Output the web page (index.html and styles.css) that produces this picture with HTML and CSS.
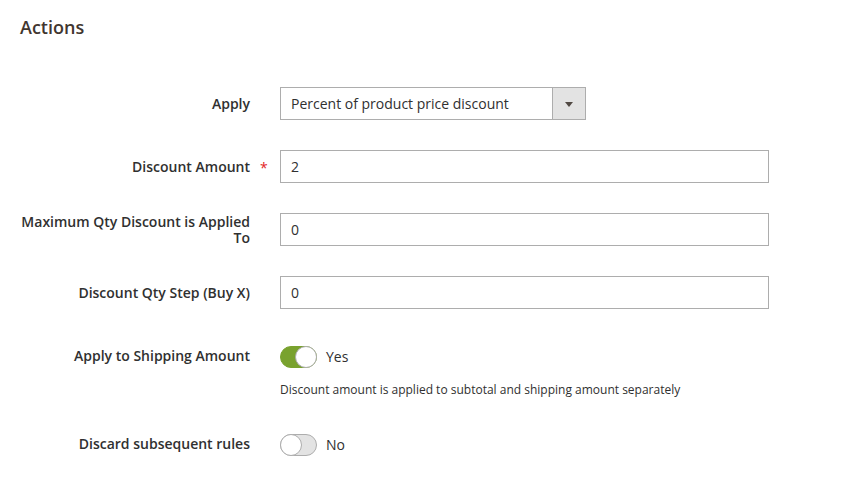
FILE: index.html
```html
<!DOCTYPE html>
<html>
<head>
<meta charset="utf-8">
<link rel="stylesheet" href="styles.css">
</head>
<body>
<div class="page">
  <div class="section-title">Actions</div>
  <div class="form">
    <div class="row">
      <div class="label">Apply</div>
      <div class="mark"></div>
      <div class="control">
        <div class="select">
          <span class="select-text">Percent of product price discount</span>
          <span class="select-btn"><span class="arrow"></span></span>
        </div>
      </div>
    </div>
    <div class="row">
      <div class="label">Discount Amount</div>
      <div class="mark"><span class="req">*</span></div>
      <div class="control"><div class="input">2</div></div>
    </div>
    <div class="row">
      <div class="label">Maximum Qty Discount is Applied To</div>
      <div class="mark"></div>
      <div class="control"><div class="input">0</div></div>
    </div>
    <div class="row">
      <div class="label">Discount Qty Step (Buy X)</div>
      <div class="mark"></div>
      <div class="control"><div class="input">0</div></div>
    </div>
    <div class="row row-toggle row-ship">
      <div class="label label-toggle">Apply to Shipping Amount</div>
      <div class="mark"></div>
      <div class="control">
        <div class="switch-line">
          <span class="switch on"><span class="knob"></span></span>
          <span class="switch-text">Yes</span>
        </div>
        <div class="note">Discount amount is applied to subtotal and shipping amount separately</div>
      </div>
    </div>
    <div class="row row-toggle row-discard">
      <div class="label label-toggle">Discard subsequent rules</div>
      <div class="mark"></div>
      <div class="control">
        <div class="switch-line">
          <span class="switch"><span class="knob"></span></span>
          <span class="switch-text">No</span>
        </div>
      </div>
    </div>
  </div>
</div>
</body>
</html>
```
FILE: styles.css
```css
html, body {
  margin: 0;
  padding: 0;
  background: #ffffff;
}
body {
  font-family: "Open Sans", "Liberation Sans", sans-serif;
  color: #303030;
}
.page {
  padding: 15px 20px 0 20px;
}
.section-title {
  font-size: 18px;
  line-height: 24px;
  font-weight: 600;
  color: #41362f;
}
.form {
  margin-top: 48px;
  display: flex;
  flex-direction: column;
  gap: 30px;
}
.row {
  display: grid;
  grid-template-columns: 230px 30px 489px;
  grid-template-rows: 33px;
  align-items: center;
}
.label {
  text-align: right;
  font-size: 14px;
  font-weight: 600;
  line-height: 16px;
  color: #303030;
}
.mark {
  padding-left: 10px;
  line-height: 1;
}
.req {
  color: #e22626;
  font-size: 14px;
  font-weight: 400;
}
.input {
  box-sizing: border-box;
  height: 33px;
  border: 1px solid #adadad;
  padding: 0 10px;
  font-size: 14px;
  line-height: 31px;
  color: #303030;
  background: #fff;
}
.select {
  box-sizing: border-box;
  width: 306px;
  height: 33px;
  border: 1px solid #adadad;
  display: flex;
  background: #fff;
}
.select-text {
  flex: 1;
  padding: 0 10px;
  font-size: 14px;
  line-height: 31px;
  color: #303030;
}
.select-btn {
  width: 32px;
  border-left: 1px solid #adadad;
  background: #e3e3e3;
  display: flex;
  align-items: center;
  justify-content: center;
}
.arrow {
  width: 0;
  height: 0;
  border-left: 4px solid transparent;
  border-right: 4px solid transparent;
  border-top: 5px solid #514943;
  margin-top: 1px;
}
.row-toggle {
  grid-template-rows: auto;
  align-items: start;
}
.row-ship {
  margin-top: 7px;
}
.row-discard {
  margin-top: 5px;
}
.label-toggle {
  line-height: 20px;
}
.switch-line {
  display: flex;
  align-items: center;
  gap: 9px;
  height: 22px;
}
.switch {
  box-sizing: border-box;
  position: relative;
  width: 37px;
  height: 22px;
  border-radius: 12px;
  border: 1px solid #adadad;
  background: #e3e3e3;
}
.switch.on {
  background: #79a22e;
  border-color: #79a22e;
}
.knob {
  box-sizing: border-box;
  position: absolute;
  top: -1px;
  left: -1px;
  width: 22px;
  height: 22px;
  border-radius: 50%;
  background: #fff;
  border: 1px solid #adadad;
}
.switch.on .knob {
  left: auto;
  right: -1px;
}
.switch-text {
  font-size: 14px;
  line-height: 22px;
  color: #303030;
}
.note {
  margin-top: 13px;
  font-size: 12px;
  line-height: 18px;
  color: #303030;
}
```
